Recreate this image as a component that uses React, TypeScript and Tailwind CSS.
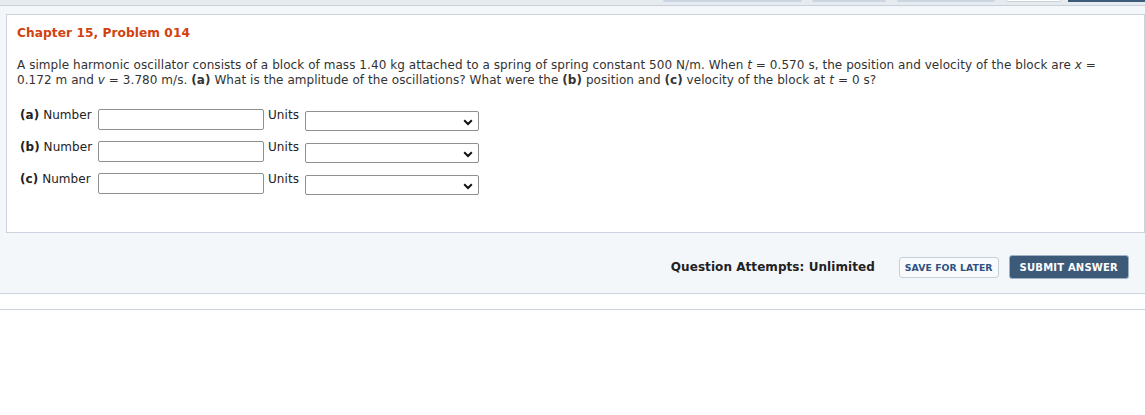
import React from "react";

const rows = ["a", "b", "c"];

const Chevron = () => (
  <svg width="10" height="7" viewBox="0 0 10 7" className="absolute right-[6px] top-[8px] pointer-events-none">
    <path d="M1.2 1.2 L5 5 L8.8 1.2" fill="none" stroke="#111" strokeWidth="2" />
  </svg>
);

const AnswerRow = ({ part }: { part: string }) => (
  <div className="flex items-start h-[32px]">
    <span className="w-[81px] pl-[3px] -mt-[1px] text-[#222]">
      <b>({part})</b> Number
    </span>
    <input className="w-[166px] h-[21px] border border-[#8f8f8f] rounded-[2px] bg-white" />
    <span className="ml-[4px] w-[37px] -mt-[1px] text-[#222]">Units</span>
    <div className="relative mt-[2px]">
      <select className="w-[174px] h-[20px] border border-[#8f8f8f] rounded-[2px] bg-white appearance-none" />
      <Chevron />
    </div>
  </div>
);

export default function App() {
  return (
    <div className="w-[1145px] h-[415px] bg-white text-[12px] leading-[15px] tracking-[0.06px] font-['DejaVu_Sans','Liberation_Sans',sans-serif]">
      {/* top nav strip, cut off */}
      <div className="h-[6px] bg-[#e6ebf0] border-b border-[#c9d2dc] flex items-start">
        <div className="ml-[663px] w-[139px] h-[2px] bg-[#ccd6e2] rounded-b" />
        <div className="ml-[10px] w-[74px] h-[2px] bg-[#ccd6e2] rounded-b" />
        <div className="ml-[11px] w-[98px] h-[2px] bg-[#ccd6e2] rounded-b" />
        <div className="ml-[11px] w-[55px] h-[2px] bg-white border-b border-x border-[#c9d2dc] rounded-b" />
        <div className="ml-[7px] w-[77px] h-[2px] bg-[#3d5a78]" />
      </div>

      <div className="bg-[#f4f7fa] border-b border-[#cbd4de] pt-[8px] pl-[6px]">
        <div className="bg-white border border-[#cbd4de] h-[219px] pl-[10px] pr-[10px] pt-[11px]">
          <h2 className="text-[#d0420f] font-bold text-[12.2px] leading-[15px]">Chapter 15, Problem 014</h2>
          <p className="mt-[17px] text-[#333]">
            A simple harmonic oscillator consists of a block of mass 1.40 kg attached to a spring of spring constant 500 N/m. When <i>t</i> = 0.570 s, the position and velocity of the block are <i>x</i> = 0.172 m and <i>v</i> = 3.780 m/s. <b>(a)</b> What is the amplitude of the oscillations? What were the <b>(b)</b> position and <b>(c)</b> velocity of the block at <i>t</i> = 0 s?
          </p>
          <div className="mt-[21px]">
            {rows.map((r) => (
              <AnswerRow key={r} part={r} />
            ))}
          </div>
        </div>

        <div className="h-[60px] pt-[8px] flex items-center justify-end pr-[16px]">
          <span className="font-bold text-[#222] mr-[24px]">Question Attempts: Unlimited</span>
          <button className="h-[21px] px-[5px] text-[9.3px] font-bold text-[#2d5282] bg-[#f8fafc] border border-[#c6d0db] rounded-[3px] mr-[10px]">
            SAVE FOR LATER
          </button>
          <button className="h-[24px] px-[10px] text-[10px] font-bold text-white bg-[#3d5a78] border border-[#9fb2c6] rounded-[3px] tracking-[0.2px]">
            SUBMIT ANSWER
          </button>
        </div>
      </div>

      <div className="h-[16px] border-b border-[#cbd4de]" />
    </div>
  );
}
